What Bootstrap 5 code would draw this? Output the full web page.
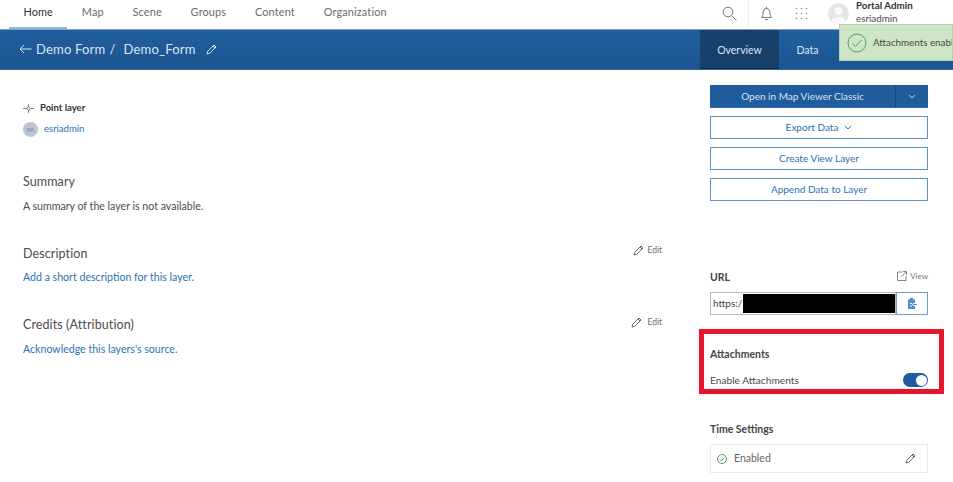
<!DOCTYPE html>
<html lang="en"><head><meta charset="utf-8"><title>Demo Form</title>
<link href="https://cdn.jsdelivr.net/npm/bootstrap@5.3.0/dist/css/bootstrap.min.css" rel="stylesheet">
<style>
html,body{height:482px;overflow:hidden}
body{font-family:Lato,"Open Sans",sans-serif;font-size:11px;color:#4c4c4c;background:#fff;position:relative;width:953px}
svg{display:block;flex:none}
.lnk{text-decoration:none;color:#2b73b3}
.topbar{height:29px;padding-left:9px}
.topitem{height:29px;padding:0 14.4px;font-size:10.9px;line-height:23px;color:#6a6a6a;letter-spacing:.15px;text-decoration:none}
.topitem.on{color:#333;border-bottom:1px solid #8fbbdb;box-shadow:inset 0 -1px 0 #8fbbdb}
.sep{width:1px;height:27px;background:#eee;margin:0 11px}
.uname{font-size:9.8px;line-height:13px;width:97px;margin-left:7px;margin-top:-4px}
.uname b{color:#333;font-weight:700;display:block}
.avatar{width:21px;height:21px;border-radius:50%;background:#e6e6e6;margin-left:20px;overflow:hidden}
.iconsbox{height:27px}
.griddots{margin-left:22px}
.banner{height:41px;background:linear-gradient(#215e9f,#1c5691);border-top:1px solid #7f9fc0;border-bottom:1px solid #2a6aa8;color:#d9e6f2;padding-left:19px}
.crumb{font-size:13px;line-height:38px;letter-spacing:.2px}
.crumbgap{margin-left:4px}
.crumbname{margin-left:8px}
.crumbpen{margin-left:10px}
.tabitem{height:39px;font-size:10.5px;line-height:40px;text-align:center;color:#dbe6f0}
.tabitem.on{width:79px;background:#17406b;border-bottom:1px solid #10263f}
.tabdata{width:57px}
.tabs{margin-right:117px}
.toast-msg{position:absolute;left:839px;top:24px;width:114px;height:37px;background:#cfe5c8;border:1px solid #b4d0ac;display:flex;align-items:center;padding-left:7px;gap:6px;font-size:9.8px;white-space:nowrap;overflow:hidden;color:#4a4a4a}
.leftside{width:700px;padding:32px 0 0 23px}
.rightside{width:218px;margin-left:10px;padding-top:15px}
.ptlayer{font-size:9.5px;font-weight:700;color:#333;height:12px;gap:6px}
.owner{margin-top:7px;gap:6px;font-size:9.5px;height:16px}
.pa{width:15px;height:15px;border-radius:50%;background:#bcc6d2;color:#8294a8;font-size:6px;line-height:15px;text-align:center;font-weight:700}
.sectitle{font-size:12.5px;line-height:16px;color:#4c4c4c;letter-spacing:.1px}
.secbody{font-size:10.6px;line-height:14px;margin-top:8.5px}
.secbox{padding-right:38px}
.sumtitle{margin-top:37px}
.desctop{margin-top:33px}
.credtop{margin-top:33px}
.edit{font-size:8.5px;color:#6a6a6a;gap:3px;align-items:center;margin-top:-6px}
.edit2{gap:5px}
.sblue{height:23px;background:#1f5c9e;color:#d5e3f0;font-size:10px;box-shadow:inset 0 -1px 0 #2f6dab}
.sblue .m{flex:1;text-align:center;line-height:23px}
.sblue .c{width:33px;border-left:1px solid #17467a;display:flex;align-items:center;justify-content:center}
.sout{height:23px;border:1px solid #5c95c9;color:#2b73b3;font-size:10px;margin-top:8px;gap:6px;justify-content:center;align-items:center;display:flex}
.urlhead{margin-top:69px;height:16px;align-items:center}
.lbl{font-size:10.5px;font-weight:700;color:#444}
.viewl{font-size:8px;color:#777;gap:3px;align-items:center;margin-top:-4px}
.urlrow{height:23px;margin-top:6px}
.urltxt{width:186px;border:1px solid #bbb;font-size:10px;padding:1px 0 1px 2px;line-height:19px;color:#444;overflow:hidden;display:flex}
.redact{flex:1;background:#000;margin-left:1px}
.urlbtn{width:32px;border:1px solid #6d9fd0;display:flex;align-items:center;justify-content:center}
.redbox{margin:14px -16px 0 -11px;height:65px;border:5px solid #e8152a;padding:13px 11px 0 6px}
.switchrow{margin-top:10px;font-size:10.2px;height:15px}
.sw{width:25px;height:14px;border-radius:8px;background:#1f5c9e;position:relative}
.sw::after{content:"";position:absolute;right:1.5px;top:1.5px;width:11px;height:11px;border-radius:50%;background:#fff}
.timehead{margin-top:28px;line-height:14px}
.timebox{margin-top:8px;height:29px;border:1px solid #eaeaea;padding:0 11px 0 6px;font-size:10.5px;color:#666}
.timeok{gap:7px}
</style></head>
<body>
<nav class="d-flex align-items-start topbar">
 <div class="d-flex">
  <a class="topitem on" href="#">Home</a><a class="topitem" href="#">Map</a><a class="topitem" href="#">Scene</a><a class="topitem" href="#">Groups</a><a class="topitem" href="#">Content</a><a class="topitem" href="#">Organization</a>
 </div>
 <div class="ms-auto d-flex align-items-center iconsbox">
  <svg width="15" height="15" viewBox="0 0 15 15" fill="none" stroke="#777" stroke-width="1"><circle cx="6" cy="6" r="4.800"/><path d="M9.500 9.500 14.500 14.500"/></svg>
  <div class="sep"></div>
  <svg width="13" height="15" viewBox="0 0 13 15" fill="none" stroke="#777" stroke-width="1"><path d="M1.500 11.500c1-1 1.500-2 1.500-4.500 0-2.500 1.200-4.500 3.500-4.500s3.500 2 3.500 4.500c0 2.500.5 3.500 1.500 4.500z"/><path d="M5 13.500h3M6.500 1v1.500"/></svg>
  <svg class="griddots" width="13" height="13" viewBox="0 0 13 13" fill="#888"><circle cx="1.500" cy="1.500" r=".8"/><circle cx="6.500" cy="1.500" r=".8"/><circle cx="11.500" cy="1.500" r=".8"/><circle cx="1.500" cy="6.500" r=".8"/><circle cx="6.500" cy="6.500" r=".8"/><circle cx="11.500" cy="6.500" r=".8"/><circle cx="1.500" cy="11.500" r=".8"/><circle cx="6.500" cy="11.500" r=".8"/><circle cx="11.500" cy="11.500" r=".8"/></svg>
  <div class="avatar"><svg width="21" height="21" viewBox="0 0 21 21" fill="#fafafa"><circle cx="10.500" cy="8" r="4"/><path d="M3 21c0-5 3.500-7 7.500-7s7.500 2 7.500 7z"/></svg></div>
  <div class="uname"><b>Portal Admin</b>esriadmin</div>
 </div>
</nav>
<header class="banner d-flex align-items-start justify-content-between">
 <div class="d-flex align-items-center crumb">
  <svg width="13" height="10" viewBox="0 0 13 10" fill="none" stroke="#d9e6f2"><path d="M12.500 5H1M5 1 1 5l4 4"/></svg>
  <span class="ms-1">Demo Form</span><span class="crumbgap">/</span><span class="crumbname">Demo_Form</span>
  <svg class="crumbpen" width="11" height="11" viewBox="0 0 11 11" fill="none" stroke="#d9e6f2"><path d="M1 10l.7-2.800L8 1l2 2-6.300 6.300zM7 2l2 2"/></svg>
 </div>
 <div class="d-flex tabs"><div class="tabitem on">Overview</div><div class="tabitem tabdata">Data</div></div>
</header>
<div class="toast-msg">
 <svg width="20" height="20" viewBox="0 0 20 20" fill="none" stroke="#5d9a60"><circle cx="10" cy="10" r="9"/><path d="M5.500 10.500 8.500 13.500 14.500 7"/></svg>
 <span>Attachments enabled</span>
</div>
<main class="d-flex">
 <section class="leftside">
  <div class="d-flex align-items-center ptlayer">
   <svg width="11" height="11" viewBox="0 0 11 11" fill="none" stroke="#666" stroke-width=".8"><circle cx="5.500" cy="5.500" r="1.500"/><path d="M0 5.500h4M7 5.500h4M5.500 1v3M5.500 7v3"/></svg>
   <span>Point layer</span>
  </div>
  <div class="d-flex align-items-center owner"><div class="pa">PA</div><a class="lnk" href="#">esriadmin</a></div>
  <div class="sectitle sumtitle">Summary</div>
  <div class="secbody">A summary of the layer is not available.</div>
  <div class="d-flex justify-content-between secbox desctop">
   <div class="sectitle">Description</div>
   <div class="d-flex edit"><svg width="11" height="11" viewBox="0 0 11 11" fill="none" stroke="#666"><path d="M1 10l.7-2.800L8 1l2 2-6.300 6.300zM7 2l2 2"/></svg>Edit</div>
  </div>
  <div class="secbody"><a class="lnk" href="#">Add a short description for this layer.</a></div>
  <div class="d-flex justify-content-between secbox credtop">
   <div class="sectitle">Credits (Attribution)</div>
   <div class="d-flex edit edit2"><svg width="11" height="11" viewBox="0 0 11 11" fill="none" stroke="#666"><path d="M1 10l.7-2.800L8 1l2 2-6.300 6.300zM7 2l2 2"/></svg>Edit</div>
  </div>
  <div class="secbody"><a class="lnk" href="#">Acknowledge this layers's source.</a></div>
 </section>
 <aside class="rightside">
  <div class="d-flex sblue"><div class="m">Open in Map Viewer Classic</div><div class="c"><svg width="8" height="5" viewBox="0 0 8 5" fill="none" stroke="#c5d6e8"><path d="M1 1l3 3 3-3"/></svg></div></div>
  <div class="sout">Export Data <svg width="8" height="5" viewBox="0 0 8 5" fill="none" stroke="#2b73b3"><path d="M1 1l3 3 3-3"/></svg></div>
  <div class="sout">Create View Layer</div>
  <div class="sout">Append Data to Layer</div>
  <div class="d-flex justify-content-between urlhead"><span class="lbl">URL</span><span class="d-flex viewl"><svg width="10" height="10" viewBox="0 0 10 10" fill="none" stroke="#777" stroke-width=".9"><path d="M5 1H.5v8.500H9V5M6 .5h3.500V4M9.500.5 4.500 5.500"/></svg><span>View</span></span></div>
  <div class="d-flex urlrow"><div class="urltxt"><span>https:/</span><div class="redact"></div></div><div class="urlbtn"><svg width="10" height="11" viewBox="0 0 10 11"><path fill="#4f8cc4" d="M3 0h3v1.500h2V5H6.500L5 6.500 6.500 8H8v3H1V1.500h2z"/><path fill="#fff" d="M3 5h2v1H3zM3 7.500h2v1H3z"/><path fill="#4f8cc4" d="M6 6h4v1H6z"/></svg></div></div>
  <div class="redbox">
   <div class="lbl">Attachments</div>
   <div class="d-flex justify-content-between align-items-center switchrow"><span>Enable Attachments</span><div class="sw"></div></div>
  </div>
  <div class="lbl timehead">Time Settings</div>
  <div class="d-flex align-items-center justify-content-between timebox">
   <span class="d-flex align-items-center timeok"><svg width="10" height="10" viewBox="0 0 10 10" fill="none" stroke="#5d9a60"><circle cx="5" cy="5" r="4.500"/><path d="M2.800 5.200 4.400 6.800 7.300 3.500"/></svg>Enabled</span>
   <svg width="11" height="11" viewBox="0 0 11 11" fill="none" stroke="#666"><path d="M1 10l.7-2.800L8 1l2 2-6.300 6.300zM7 2l2 2"/></svg>
  </div>
 </aside>
</main>
<script src="https://cdn.jsdelivr.net/npm/bootstrap@5.3.0/dist/js/bootstrap.bundle.min.js"></script>
</body></html>
